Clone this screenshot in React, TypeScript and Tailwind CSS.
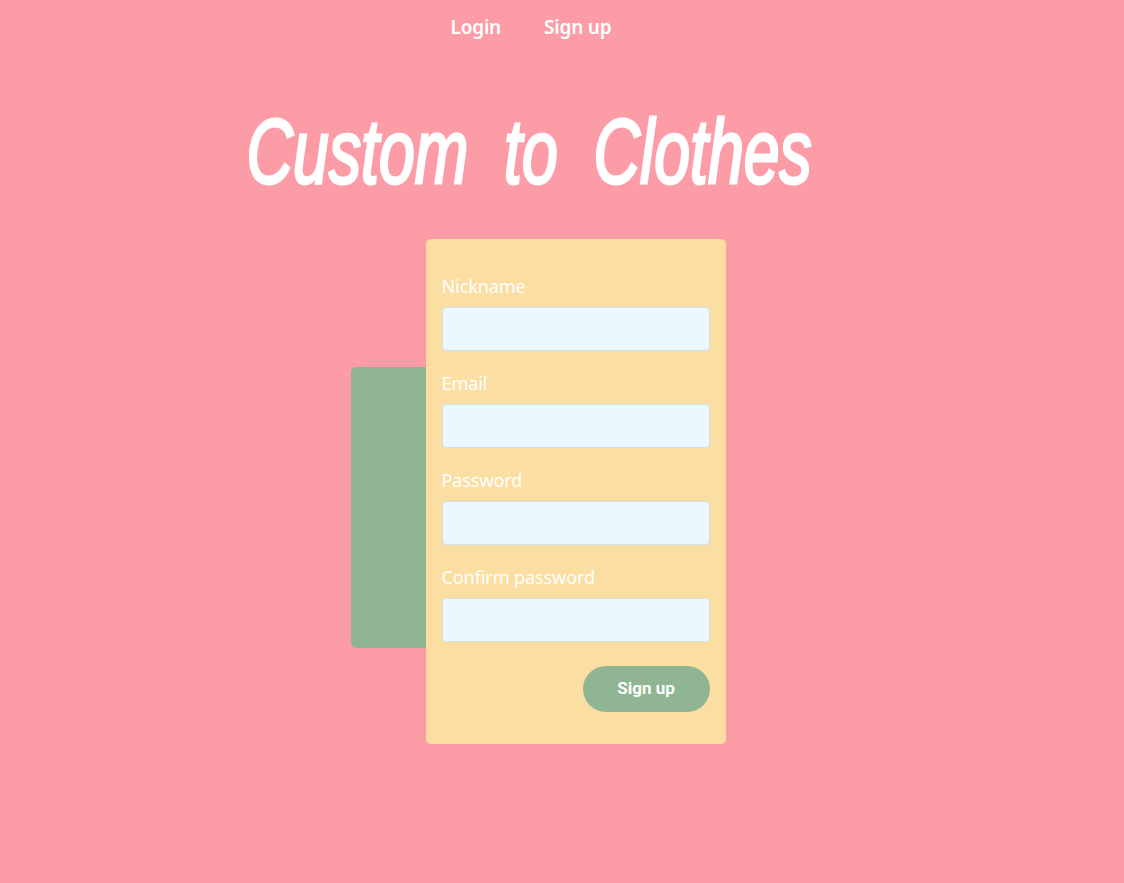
const labelFont = "font-['Noto_Sans','Noto_Sans_CJK_KR',sans-serif]";

function Field({ label }: { label: string }) {
  return (
    <div className="flex flex-col">
      <label className={`${labelFont} h-[36px] pt-[3px] text-[18px] leading-[25px] tracking-[-0.08px] text-white`}>{label}</label>
      <input className="h-[44px] w-full rounded-[4px] border border-[#cbdff0] bg-[#ecf8ff]" />
    </div>
  );
}

export default function App() {
  return (
    <div className="flex min-h-[883px] flex-col items-center overflow-hidden bg-[#fc9ca6]">
      <nav className={`${labelFont} mr-[62px] flex h-[54px] items-center gap-[43px] text-[19px] leading-none font-semibold tracking-[-0.2px] text-white`}>
        <a>Login</a>
        <a>Sign up</a>
      </nav>
      <h1 className="mt-[27px] mr-[66px] mb-[17px] flex h-[141px] origin-center scale-x-[0.715] items-center font-['Liberation_Sans',sans-serif] text-[90px] leading-none font-normal whitespace-pre text-white italic [-webkit-text-stroke:3px_white]">
        Custom  to  Clothes
      </h1>
      <div className="ml-[-48px] flex w-[375px] items-start">
        <div className="mt-[128px] h-[281px] w-[80px] shrink-0 rounded-[5px] bg-[#90b593]" />
        <form className="relative ml-[-5px] flex h-[505px] w-[300px] shrink-0 flex-col gap-[17px] rounded-[5px] bg-[#fbdea2] px-[16px] pt-[32px]">
          <Field label="Nickname" />
          <Field label="Email" />
          <Field label="Password" />
          <Field label="Confirm password" />
          <div className="mt-[7px] flex justify-end">
            <button type="button" className="h-[46px] w-[127px] rounded-full bg-[#90b593] font-['Roboto',sans-serif] text-[17px] font-bold text-white">
              Sign up
            </button>
          </div>
        </form>
      </div>
    </div>
  );
}
